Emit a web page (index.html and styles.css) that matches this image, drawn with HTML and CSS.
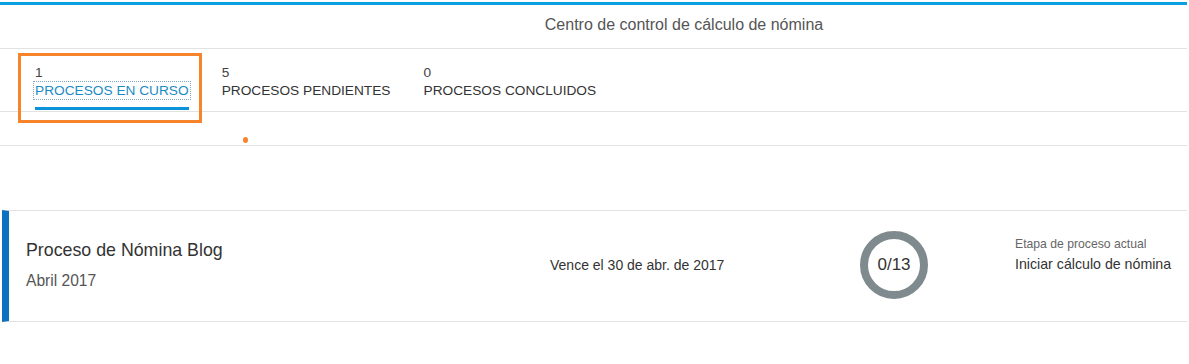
FILE: index.html
```html
<!DOCTYPE html>
<html lang="es">
<head>
<meta charset="utf-8">
<title>Centro de control de cálculo de nómina</title>
<link rel="stylesheet" href="styles.css">
</head>
<body>
<div class="page">
  <header class="header">
    <h1 class="title">Centro de control de cálculo de nómina</h1>
  </header>
  <nav class="tabs">
    <div class="tab tab-active">
      <span class="tab-count">1</span>
      <span class="tab-label"><span class="focus">PROCESOS EN CURSO</span></span>
      <span class="tab-bar"></span>
      <span class="highlight-box"></span>
    </div>
    <div class="tab">
      <span class="tab-count">5</span>
      <span class="tab-label">PROCESOS PENDIENTES</span>
    </div>
    <div class="tab">
      <span class="tab-count">0</span>
      <span class="tab-label">PROCESOS CONCLUIDOS</span>
    </div>
    <span class="cursor-dot"></span>
  </nav>
  <div class="toolbar"></div>
  <section class="list">
    <article class="card">
      <div class="card-main">
        <div class="card-title">Proceso de Nómina Blog</div>
        <div class="card-sub">Abril 2017</div>
      </div>
      <div class="card-due">Vence el 30 de abr. de 2017</div>
      <div class="card-progress"><div class="ring">0/13</div></div>
      <div class="card-step">
        <div class="step-caption">Etapa de proceso actual</div>
        <div class="step-name">Iniciar cálculo de nómina</div>
      </div>
    </article>
  </section>
</div>
</body>
</html>
```

FILE: styles.css
```css
* { box-sizing: border-box; }

html, body {
  margin: 0;
  padding: 0;
  background: #ffffff;
}

body {
  font-family: "Liberation Sans", Arial, sans-serif;
  color: #333333;
}

.page {
  width: 1187px;
  padding-top: 2px;
}

.header {
  border-top: 3px solid #0aa0e2;
  border-bottom: 1px solid #e2e2e2;
  height: 47px;
  display: flex;
  align-items: center;
  justify-content: center;
  padding-left: 181px;
  padding-bottom: 3px;
}

.title {
  margin: 0;
  font-weight: normal;
  font-size: 16px;
  color: #555555;
}

.tabs {
  position: relative;
  display: flex;
  gap: 33px;
  height: 63px;
  padding-top: 16px;
  padding-left: 35px;
  border-bottom: 1px solid #e2e2e2;
}

.tab {
  position: relative;
  display: flex;
  flex-direction: column;
  align-items: flex-start;
  font-size: 13.7px;
  line-height: 16px;
}

.tab-count {
  color: #444444;
}

.tab-label {
  margin-top: 2px;
  color: #333333;
}

.tab-active .tab-label {
  color: #1b8bc6;
}

.focus {
  outline: 1px dotted #7fa9c4;
  outline-offset: 1px;
}

.tab-bar {
  margin-top: 8px;
  width: 100%;
  height: 3px;
  background: #0a93d9;
}

.highlight-box {
  position: absolute;
  left: -17px;
  top: -12px;
  width: 184px;
  height: 70px;
  border: 3px solid #f7842a;
}

.cursor-dot {
  position: absolute;
  left: 243px;
  top: 88px;
  width: 5px;
  height: 6px;
  border-radius: 50%;
  background: #f7842a;
}

.toolbar {
  height: 34px;
  border-bottom: 1px solid #e2e2e2;
}

.list {
  padding-top: 64px;
}

.card {
  margin-left: 2px;
  height: 112px;
  border-top: 1px solid #e2e2e2;
  border-bottom: 1px solid #e2e2e2;
  border-left: 7px solid #0a72c0;
  padding-left: 17px;
  padding-bottom: 3px;
  display: grid;
  grid-template-columns: 524px 310px 155px 1fr;
  align-items: center;
}

.card-title {
  font-size: 17.8px;
  line-height: 22px;
  color: #333333;
}

.card-sub {
  margin-top: 10px;
  font-size: 15.6px;
  line-height: 20px;
  color: #555555;
}

.card-due {
  font-size: 14px;
  color: #333333;
}

.ring {
  width: 68px;
  height: 68px;
  border: 8px solid #7f8a8e;
  border-radius: 50%;
  display: flex;
  align-items: center;
  justify-content: center;
  font-size: 17px;
  color: #333333;
}

.card-step {
  align-self: start;
  margin-top: 26px;
}

.step-caption {
  font-size: 12.2px;
  line-height: 15px;
  color: #666666;
}

.step-name {
  margin-top: 3px;
  font-size: 14.2px;
  line-height: 18px;
  color: #333333;
}
```
